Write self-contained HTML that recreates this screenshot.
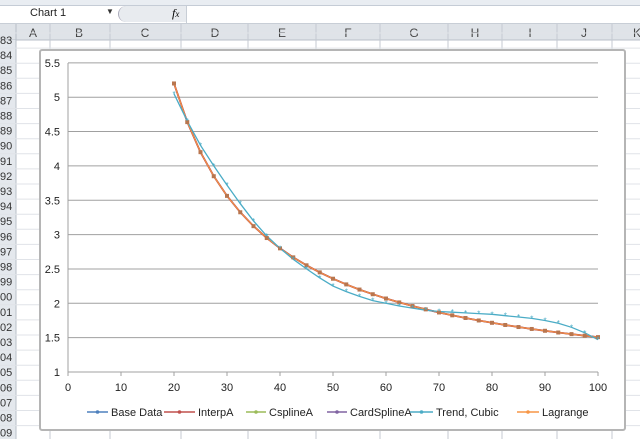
<!DOCTYPE html>
<html><head><meta charset="utf-8"><style>
body{margin:0;width:640px;height:439px;overflow:hidden;background:#fff;font-family:"Liberation Sans",sans-serif;position:relative}
.abs{position:absolute}
</style></head><body>
<div class="abs" style="left:0;top:0;width:640px;height:5px;background:#e9edf2;border-bottom:1px solid #c5ccd6"></div>
<div class="abs" style="left:0;top:6px;width:640px;height:17px;background:#fff;border-bottom:1px solid #c8ced6"></div>
<div class="abs" style="left:30px;top:7px;font-size:11px;color:#222">Chart 1</div>
<div class="abs" style="left:106px;top:7px;font-size:8px;color:#333">▼</div>
<div class="abs" style="left:118px;top:6px;width:68px;height:16px;background:#e8ebef;border-radius:8px 0 0 8px;border-left:1px solid #aab"></div>
<div class="abs" style="left:172px;top:6px;font-size:12px;font-style:italic;font-family:'Liberation Serif',serif">f<span style="font-size:9px">x</span></div>
<div class="abs" style="left:186px;top:6px;width:1px;height:17px;background:#c8ced6"></div>
<svg class="abs" style="left:0;top:0" width="640" height="439">
<rect x="0" y="24" width="640" height="16" fill="#dfe3e8"/>
<line x1="0" y1="40" x2="640" y2="40" stroke="#b8bfc8"/>
<rect x="0" y="40" width="16" height="399" fill="#e4e8ed"/>
<line x1="16" y1="24" x2="16" y2="439" stroke="#b8bfc8"/>
<g stroke="#c4cad2">
<line x1="50" y1="24" x2="50" y2="439"/><line x1="110" y1="24" x2="110" y2="439"/><line x1="181" y1="24" x2="181" y2="439"/><line x1="248" y1="24" x2="248" y2="439"/><line x1="316" y1="24" x2="316" y2="439"/><line x1="380" y1="24" x2="380" y2="439"/><line x1="448" y1="24" x2="448" y2="439"/><line x1="502" y1="24" x2="502" y2="439"/><line x1="557" y1="24" x2="557" y2="439"/><line x1="612" y1="24" x2="612" y2="439"/>
</g>
<g font-size="12" fill="#444" text-anchor="middle">
<text x="33" y="37">A</text><text x="79" y="37">B</text><text x="145" y="37">C</text><text x="215" y="37">D</text><text x="282" y="37">E</text><text x="348" y="37">F</text><text x="414" y="37">G</text><text x="475" y="37">H</text><text x="530" y="37">I</text><text x="584" y="37">J</text><text x="637" y="37">K</text>
</g>
<g id="rows" font-size="11" fill="#333"></g>
<rect x="40" y="50" width="585" height="380" fill="#fff" stroke="#b5b5b5" stroke-width="2" rx="2"/>
<g id="plot"></g>
</svg>
<script>
var s='',r=document.getElementById('rows');
var lab=['83','84','85','86','87','88','89','90','91','92','93','94','95','96','97','98','99','00','01','02','03','04','05','06','07','08','09'];
for(var i=0;i<lab.length;i++){var y=44+i*15.1;s+='<line x1="0" y1="'+(y-11)+'" x2="640" y2="'+(y-11)+'" stroke="#e0e3e8"/><text x="0" y="'+y+'" font-size="11" fill="#333">'+lab[i]+'</text>';}
r.innerHTML=s;
function X(v){return 68+v*5.3} function Y(v){return 372-(v-1)*68.7}
var p='';
for(var k=0;k<=9;k++){var v=1+k*0.5,y=Y(v);p+='<line x1="68" y1="'+y+'" x2="598" y2="'+y+'" stroke="#a0a0a0"/>';p+='<text x="60" y="'+(y+4)+'" font-size="11" text-anchor="end" fill="#222">'+v+'</text>';}
p+='<line x1="68" y1="63" x2="68" y2="372" stroke="#a0a0a0"/>';
for(var k=0;k<=10;k++){var x=X(k*10);p+='<line x1="'+x+'" y1="372" x2="'+x+'" y2="376" stroke="#a0a0a0"/><text x="'+x+'" y="391" font-size="11" text-anchor="middle" fill="#222">'+(k*10)+'</text>';}
function f(x){return 0.7+78.75/(x-2.5)}
var pts=[];for(var x=20;x<=100.01;x+=2.5)pts.push([X(x),Y(f(x))]);
function line(a,c,w){return '<polyline fill="none" stroke="'+c+'" stroke-width="'+w+'" points="'+a.map(function(q){return q[0].toFixed(1)+','+q[1].toFixed(1)}).join(' ')+'"/>'}
var tr=[[20,5.05],[22.5,4.65],[25,4.3],[27.5,4.0],[30,3.72],[32.5,3.45],[35,3.2],[37.5,2.98],[40,2.8],[42.5,2.64],[45,2.5],[47.5,2.37],[50,2.25],[52.5,2.17],[55,2.1],[57.5,2.04],[60,2.0],[62.5,1.96],[65,1.93],[67.5,1.9],[70,1.88],[72.5,1.87],[75,1.86],[77.5,1.85],[80,1.84],[82.5,1.82],[85,1.8],[87.5,1.78],[90,1.75],[92.5,1.71],[95,1.65],[97.5,1.57],[100,1.47]].map(function(q){return [X(q[0]),Y(q[1])]});
p+=line(pts,'#9bbb59',1.5)+line(pts,'#8064a2',1.5)+line(pts,'#c0504d',1.8)+line(pts,'#f79646',1);
p+=line(tr,'#4bacc6',1.3);
pts.forEach(function(q){p+='<rect x="'+(q[0]-2)+'" y="'+(q[1]-2)+'" width="4" height="4" fill="#b8764f"/>'});
tr.forEach(function(q){p+='<text x="'+q[0]+'" y="'+(q[1]+3)+'" font-size="8" text-anchor="middle" fill="#4bacc6">*</text>'});
var L=[[87,111,'Base Data','#4f81bd'],[164,198,'InterpA','#c0504d'],[246,269,'CsplineA','#9bbb59'],[327,350,'CardSplineA','#8064a2'],[410,436,'Trend, Cubic','#4bacc6'],[517,542,'Lagrange','#f79646']];
L.forEach(function(l){p+='<line x1="'+l[0]+'" y1="412" x2="'+(l[1]-3)+'" y2="412" stroke="'+l[3]+'" stroke-width="1.5"/><circle cx="'+((l[0]+l[1]-3)/2)+'" cy="412" r="1.8" fill="'+l[3]+'"/><text x="'+l[1]+'" y="416" font-size="11" fill="#222">'+l[2]+'</text>'});
document.getElementById('plot').innerHTML=p;
</script>
</body></html>
